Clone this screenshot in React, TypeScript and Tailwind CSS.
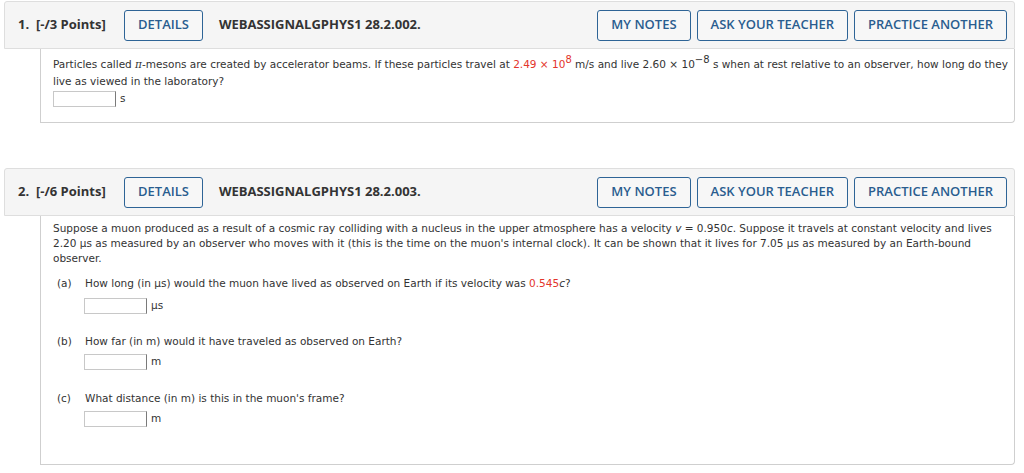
import React from "react";

const btn =
  "h-[31px] px-[13px] border border-[#2e6496] rounded-[3px] bg-[#f7f7f7] text-[#2a5d8f] text-[13px] font-semibold flex items-center whitespace-nowrap";

function Header({ num, pts, code }: { num: string; pts: string; code: string }) {
  return (
    <div className="h-[48px] border border-[#dedede] bg-[#f5f5f5] rounded-t-[3px] flex items-center pl-[13px] pr-[7px] font-['Open_Sans',sans-serif] text-[#333]">
      <span className="text-[13px] font-bold w-[106px] whitespace-nowrap">
        {num}&nbsp;&nbsp;{pts}
      </span>
      <div className={btn}>DETAILS</div>
      <span className="ml-[16px] text-[13px] font-bold whitespace-nowrap">{code}</span>
      <div className="ml-auto flex gap-[6px]">
        <div className={btn}>MY NOTES</div>
        <div className={btn}>ASK YOUR TEACHER</div>
        <div className={btn}>PRACTICE ANOTHER</div>
      </div>
    </div>
  );
}

function Box({ unit }: { unit: string }) {
  return (
    <div className="flex items-center h-[16px]">
      <div className="w-[63px] h-[16px] border border-[#c8c8c8] border-r-[#7a7a7a] bg-white" />
      <span className="ml-[4px]">{unit}</span>
    </div>
  );
}

const red = "text-[#e3352b]";

export default function App() {
  return (
    <div className="w-[1024px] h-[473px] overflow-hidden bg-white pl-[4px] pr-[9px] pt-[1px] font-['Verdana','DejaVu_Sans',sans-serif] text-[10.5px] text-[#333]">
      {/* Question 1 */}
      <Header num="1." pts="[-/3 Points]" code="WEBASSIGNALGPHYS1 28.2.002." />
      <div className="ml-[36px] border-l border-r border-b border-[#cfcfcf] rounded-br-[4px] pl-[12px] pt-[7px] h-[74px]">
        <p className="leading-[17px] whitespace-nowrap">
          Particles called <i className="font-['DejaVu_Serif',serif]">π</i>-mesons are created by accelerator beams. If these particles travel at{" "}
          <span className={red}>
            2.49 × 10<sup className="text-[10px]">8</sup>
          </span>{" "}
          m/s and live 2.60 × 10<sup className="text-[10px]">−8</sup> s when at rest relative to an observer, how long do they
          <br />
          live as viewed in the laboratory?
        </p>
        <div className="mt-[1px]">
          <Box unit="s" />
        </div>
      </div>

      <div className="h-[45px]" />

      {/* Question 2 */}
      <Header num="2." pts="[-/6 Points]" code="WEBASSIGNALGPHYS1 28.2.003." />
      <div className="ml-[36px] border-l border-r border-b border-[#cfcfcf] rounded-br-[4px] pl-[12px] pt-[5px] h-[249px]">
        <p className="leading-[15px] whitespace-nowrap">
          Suppose a muon produced as a result of a cosmic ray colliding with a nucleus in the upper atmosphere has a velocity <i>v</i> = 0.950<i>c</i>. Suppose it travels at constant velocity and lives
          <br />
          2.20 µs as measured by an observer who moves with it (this is the time on the muon's internal clock). It can be shown that it lives for 7.05 µs as measured by an Earth-bound
          <br />
          observer.
        </p>

        <div className="mt-[10px] pl-[4px]">
          <div className="flex leading-[15px]">
            <span className="w-[28px]">(a)</span>
            <span>
              How long (in µs) would the muon have lived as observed on Earth if its velocity was <span className={red}>0.545</span>
              <i>c</i>?
            </span>
          </div>
          <div className="pl-[27px] mt-[7px]">
            <Box unit="µs" />
          </div>
        </div>

        <div className="mt-[20px] pl-[4px]">
          <div className="flex leading-[15px]">
            <span className="w-[28px]">(b)</span>
            <span>How far (in m) would it have traveled as observed on Earth?</span>
          </div>
          <div className="pl-[27px] mt-[5px]">
            <Box unit="m" />
          </div>
        </div>

        <div className="mt-[21px] pl-[4px]">
          <div className="flex leading-[15px]">
            <span className="w-[28px]">(c)</span>
            <span>What distance (in m) is this in the muon's frame?</span>
          </div>
          <div className="pl-[27px] mt-[5px]">
            <Box unit="m" />
          </div>
        </div>
      </div>
    </div>
  );
}
